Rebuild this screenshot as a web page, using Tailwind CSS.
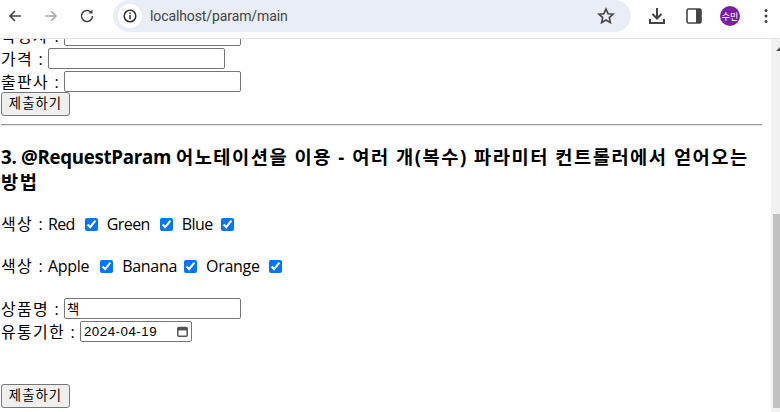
<!DOCTYPE html>
<html lang="ko">
<head>
<meta charset="utf-8">
<script src="https://cdn.jsdelivr.net/npm/@tailwindcss/browser@4"></script>
</head>
<body class="w-[780px] h-[412px] overflow-hidden bg-white text-black font-['Open_Sans','Noto_Sans_CJK_KR',sans-serif] text-base">
<header class="h-[39px] pb-[6px] flex items-center border-b border-[#e3e3e3] bg-white">
  <svg class="w-4 h-4 ml-[7px] text-[#444]" viewBox="0 0 16 16" fill="none" stroke="currentColor" stroke-width="1.6"><path d="M14 8H3M8 3 3 8l5 5"/></svg>
  <svg class="w-4 h-4 ml-[20px] text-[#aaa]" viewBox="0 0 16 16" fill="none" stroke="currentColor" stroke-width="1.6"><path d="M2 8h11M8 3l5 5-5 5"/></svg>
  <svg class="w-4 h-4 ml-[20px] text-[#444]" viewBox="0 0 16 16" fill="none" stroke="currentColor" stroke-width="1.6"><path d="M13.5 8A5.5 5.5 0 1 1 12 4.2"/><path d="M13.5 1.5v4h-4" fill="currentColor" stroke="none"/></svg>
  <div class="ml-[18px] w-[518px] h-[32px] rounded-full bg-[#e9edf7] flex items-center">
    <span class="ml-[5px] w-[24px] h-[24px] rounded-full bg-white flex items-center justify-center">
      <svg class="w-[14px] h-[14px] text-[#333]" viewBox="0 0 14 14" fill="none" stroke="currentColor" stroke-width="1.5"><circle cx="7" cy="7" r="5.8"/><path d="M7 6v4.2M7 3.4v1.5"/></svg>
    </span>
    <span class="ml-[8px] text-[14px] tracking-[-0.1px] text-[#444] font-['Roboto',sans-serif]">localhost/param/main</span>
    <svg class="ml-auto mr-[16px] w-[18px] h-[18px] text-[#444]" viewBox="0 0 18 18" fill="none" stroke="currentColor" stroke-width="1.6"><path d="m9 2 2.1 4.7 5 .5-3.8 3.4 1.1 5L9 13l-4.4 2.6 1.1-5L1.900 7.200l5-.5z"/></svg>
  </div>
  <svg class="ml-[17px] w-[18px] h-[18px] text-[#444]" viewBox="0 0 18 18" fill="none" stroke="currentColor" stroke-width="2"><path d="M9 1v10M4.500 7 9 11.500 13.500 7M2 12v4h14v-4"/></svg>
  <svg class="ml-[20px] w-[16px] h-[16px] text-[#444]" viewBox="0 0 16 16"><rect x="1" y="1" width="14" height="14" rx="1.500" fill="none" stroke="currentColor" stroke-width="1.600"/><rect x="10" y="1" width="5" height="14" fill="currentColor"/></svg>
  <span class="ml-[18px] w-[20px] h-[20px] rounded-full bg-[#7b1fa2] text-white text-[9px] flex items-center justify-center leading-none">수민</span>
  <svg class="ml-[24px] w-[4px] h-[16px] text-[#444]" viewBox="0 0 4 16" fill="currentColor"><circle cx="2" cy="2.500" r="1.500"/><circle cx="2" cy="8" r="1.500"/><circle cx="2" cy="13.500" r="1.500"/></svg>
</header>
<div class="relative h-[373px] overflow-hidden">
  <main class="absolute left-[1px] top-[-15px] w-[761px]">
    <div class="flex items-center h-[23px]"><span class="tracking-[1.28px] mr-[4px]">작성자 :</span><input class="w-[177px] h-[21px] border border-[#767676] rounded-[2px]" type="text"></div>
    <div class="flex items-center h-[23px]"><span class="tracking-[1.28px] mr-[4px]">가격 :</span><input class="w-[177px] h-[21px] border border-[#767676] rounded-[2px]" type="text"></div>
    <div class="flex items-center h-[23px]"><span class="tracking-[1.28px] mr-[4px]">출판사 :</span><input class="w-[177px] h-[21px] border border-[#767676] rounded-[2px]" type="text"></div>
    <button class="block mt-[-1px] w-[69px] h-[24px] border border-[#767676] rounded-[3px] bg-[#efefef] text-[13.333px] leading-none tracking-[1.07px]">제출하기</button>
    <hr class="mt-[8px] border-t border-b border-t-[#9a9a9a] border-b-[#e5e5e5]">
    <h3 class="mt-[18px] text-[18.720px] leading-[25px] font-bold"><span class="tracking-[-0.3px]">3. @RequestParam</span> <span class="tracking-[1.5px]">어노테이션을 이용 - 여러 개(복수) 파라미터 컨트롤러에서 얻어오는 방법</span></h3>
    <div class="mt-[18px] h-[24px] flex items-center tracking-[-0.6px]"><span class="tracking-[1.28px] mr-[4px]">색상 :</span>Red<input type="checkbox" checked class="block w-[13px] h-[13px] ml-[10px] mr-[9px]">Green<input type="checkbox" checked class="block w-[13px] h-[13px] ml-[10px] mr-[9px]">Blue<input type="checkbox" checked class="block w-[13px] h-[13px] ml-[8px]"></div>
    <div class="mt-[18px] h-[24px] flex items-center tracking-[-0.3px]"><span class="tracking-[1.28px] mr-[4px]">색상 :</span>Apple<input type="checkbox" checked class="block w-[13px] h-[13px] ml-[11px] mr-[9px]">Banana<input type="checkbox" checked class="block w-[13px] h-[13px] ml-[7px] mr-[9px]">Orange<input type="checkbox" checked class="block w-[13px] h-[13px] ml-[9px]"></div>
    <div class="mt-[19px] flex items-center h-[23px]"><span class="tracking-[1.28px] mr-[4px]">상품명 :</span><input class="w-[177px] h-[21px] border border-[#767676] rounded-[2px] px-[2px] text-[13.333px]" type="text" value="책"></div>
    <div class="flex items-center h-[23px]"><span class="tracking-[1.28px] mr-[4px]">유통기한 :</span>
      <div class="relative w-[112px] h-[21px]">
        <input class="block w-full h-full border border-[#767676] rounded-[2px] pl-[3px] text-[13.333px] tracking-[0.5px] font-['Liberation_Sans',sans-serif]" type="text" value="2024-04-19">
        <svg class="absolute right-[4px] top-[5px] w-[11px] h-[11px] text-[#555]" viewBox="0 0 11 11" fill="none" stroke="currentColor" stroke-width="1.500"><rect x=".8" y="1.500" width="9.400" height="8.700" rx="1"/><path d="M.8 3.200h9.400" stroke-width="2.500"/></svg>
      </div>
    </div>
    <button class="block mt-[41px] w-[69px] h-[24px] border border-[#767676] rounded-[3px] bg-[#efefef] text-[13.333px] leading-none tracking-[1.07px]">제출하기</button>
  </main>
  <aside class="absolute right-0 top-0 bottom-0 w-[9px] bg-[#f1f1f1] flex flex-col">
    <div class="ml-[5px] mt-[8px] w-0 h-0 border-l-[4px] border-r-[4px] border-b-[4px] border-l-transparent border-r-transparent border-b-[#505050]"></div>
    <div class="ml-[2px] mt-[163px] h-[194px] bg-[#c1c1c1]"></div>
  </aside>
</div>
</body>
</html>
